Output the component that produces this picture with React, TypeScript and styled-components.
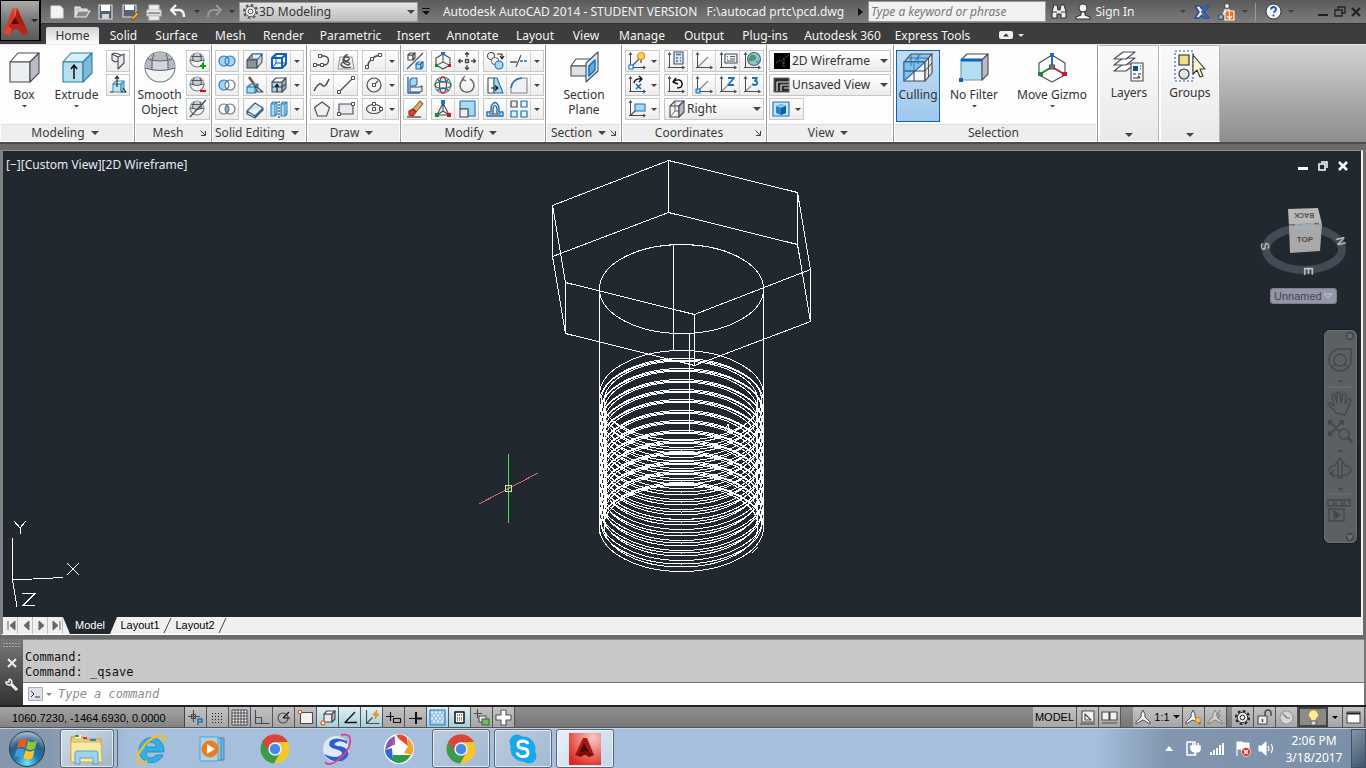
import React, { ReactNode } from "react";
import styled, { createGlobalStyle, css } from "styled-components";

const INK = "#474b53";
const BLUE = "#1d6fbf";
const SKY = "#a8d9ec";

const GlobalStyle = createGlobalStyle`
  * { box-sizing: border-box; }
  body { margin: 0; background: #6b6b6b; }
  button, input, select { font: inherit; color: inherit; margin: 0; padding: 0; border: 0; background: none; border-radius: 0; outline: 0; }
  svg { display: block; flex: none; }
  h1, h2, p { margin: 0; font: inherit; }
`;

const Page = styled.div`
  min-height: 100vh;
  display: flex;
  flex-direction: column;
  overflow: hidden;
  font: 12px/16px "Noto Sans", "Open Sans", sans-serif;
  color: #3a3a3a;
`;

/* ---------- header ---------- */
const Header = styled.header`
  display: grid;
  grid-template-columns: 41px 1fr;
  grid-template-rows: 24px 20px;
  background: #3d3d3d;
`;
const AppButton = styled.button`
  grid-row: 1 / 3;
  height: 41px;
  border: 1px solid #000;
  border-right-width: 2px;
  background: linear-gradient(#aaa, #777 50%, #5a5a5a);
  display: flex;
  align-items: center;
  padding-left: 2px;
`;
const TitleBar = styled.div`
  display: flex;
  align-items: center;
  padding: 0 2px 0 5px;
  background: linear-gradient(#5a5a5a, #7a7a7a 90%);
  border-bottom: 1px solid #303030;
  color: #f2f2f2;
`;
const BarButton = styled.button<{ $w: number }>`
  width: ${(p) => p.$w}px;
  height: 22px;
  flex: none;
  display: flex;
  align-items: center;
  justify-content: center;
`;
const Spacer = styled.div<{ $w?: number }>`
  ${(p) => (p.$w ? css`flex: 0 0 ${p.$w}px;` : css`flex: 1;`)}
`;
const Title = styled.h1`
  flex: 1;
  text-align: center;
  white-space: pre;
`;
const SelectWrap = styled.label<{ $w: number; $look?: "title" | "ribbon" }>`
  width: ${(p) => p.$w}px;
  height: ${(p) => (p.$look === "title" ? 20 : 22)}px;
  flex: none;
  display: flex;
  align-items: center;
  padding: 0 2px;
  color: #333;
  border: 1px solid ${(p) => (p.$look === "title" ? "#9a9a9a" : "#c6c6c6")};
  background: ${(p) => (p.$look === "title" ? "linear-gradient(#e4e4e4, #bdbdbd)" : "linear-gradient(#fff, #ebebeb)")};
  select {
    flex: 1;
    min-width: 0;
    appearance: none;
    height: 18px;
    line-height: 18px;
  }
`;
const SearchInput = styled.input`
  width: 178px;
  height: 21px;
  background: #f1f1f1;
  color: #333;
  font-style: italic;
  padding-left: 2px;
  border: 1px solid #999;
  &::placeholder { color: #777; opacity: 1; }
`;
const Divider = styled.span`
  width: 1px;
  height: 18px;
  background: #9a9a9a;
`;
const Tabs = styled.nav`
  display: flex;
  align-items: flex-end;
  padding-left: 2px;
`;
const Tab = styled.button<{ $w: number; $on?: boolean }>`
  width: ${(p) => p.$w - (p.$on ? 4 : 0)}px;
  margin: ${(p) => (p.$on ? "0 1px 0 3px" : "0")};
  height: 17px;
  flex: none;
  line-height: 16px;
  white-space: nowrap;
  color: #f4f4f4;
  ${(p) => p.$on && css`
    color: #333;
    background: linear-gradient(#d2d2d2, #fdfdfd);
    border-radius: 2px 2px 0 0;
  `}
`;
const RibbonToggle = styled.button`
  margin-left: 22px;
  height: 18px;
  display: flex;
  align-items: center;
  gap: 5px;
`;

/* ---------- ribbon ---------- */
const Ribbon = styled.section`
  display: flex;
  height: 100px;
  background: linear-gradient(#d2d2d2, #8c8c8c);
  border-top: 1px solid #e8e8e8;
  border-bottom: 2px solid #4c4c4c;
`;
const PanelBox = styled.section<{ $w: number }>`
  width: ${(p) => p.$w}px;
  flex: none;
  display: flex;
  flex-direction: column;
  background: #fdfdfd;
  border-right: 1px solid #9a9a9a;
  padding: 0 1px 1px 1px;
`;
const PanelBody = styled.div<{ $pad?: number }>`
  flex: 1;
  display: flex;
  align-items: flex-start;
  gap: 4px;
  padding: 5px 0 0 ${(p) => p.$pad ?? 1}px;
`;
const PanelTitle = styled.h2`
  height: 17px;
  display: flex;
  align-items: center;
  padding-right: 4px;
  background: #eee;
  border-top: 1px solid #ddd;
`;
const PanelName = styled.span`
  flex: 1;
  display: flex;
  align-items: center;
  justify-content: center;
  gap: 6px;
  white-space: nowrap;
`;
const Column = styled.div`
  display: flex;
  flex-direction: column;
  gap: 2px;
`;
const Row = styled.div`
  display: flex;
  gap: 4px;
`;
const Group = styled.div`
  display: flex;
  height: 22px;
  width: max-content;
  border: 1px solid #c8c8c8;
  background: linear-gradient(#fff, #ececec);
`;
const Tool = styled.button<{ $drop?: boolean; $plain?: boolean }>`
  width: ${(p) => (p.$plain ? 11 : p.$drop ? 13 : 24)}px;
  height: 20px;
  display: flex;
  align-items: center;
  justify-content: center;
  border-left: 1px solid ${(p) => (p.$plain ? "transparent" : "#d4d4d4")};
  &:first-child { border-left: 0; width: 22px; }
`;
const BigTool = styled.button<{ $w: number; $on?: boolean }>`
  width: ${(p) => p.$w}px;
  height: 72px;
  flex: none;
  display: flex;
  flex-direction: column;
  align-items: center;
  line-height: 15px;
  color: #333;
  border: 1px solid ${(p) => (p.$on ? "#0a63b0" : "transparent")};
  background: ${(p) => (p.$on ? "linear-gradient(#c3dcf3, #9fc9ee)" : "none")};
  span { margin: 4px 0 3px; white-space: pre-line; }
`;
const SlimPanel = styled.button<{ $w: number }>`
  width: ${(p) => p.$w}px;
  flex: none;
  display: flex;
  flex-direction: column;
  align-items: center;
  justify-content: space-between;
  color: #333;
  padding: 4px 0 4px;
  border: 1px solid #b5b5b5;
  border-left: 2px solid #fff;
  border-bottom-color: #fff;
  background: linear-gradient(#fafafa, #e9e9e9);
`;
const Stack = styled.span`
  display: flex;
  flex-direction: column;
  align-items: center;
  gap: 3px;
`;

/* ---------- drawing area ---------- */
const Frame = styled.main`
  flex: 1;
  display: flex;
  flex-direction: column;
  margin: 6px 3px 4px 0;
  border: 1px solid #8d8f8c;
  border-left: 3px solid #808080;
  border-right: 2px solid #f2f2f2;
  border-bottom: 1px solid #fff;
`;
const Canvas = styled.div`
  position: relative;
  flex: 1;
  min-height: 430px;
  background: #212830;
  overflow: hidden;
`;
const ViewLabel = styled.p`
  position: absolute;
  left: 3px;
  top: 6px;
  color: #e8eaec;
`;
const ModelDrawing = styled.svg`
  position: absolute;
  left: 0;
  top: 0;
`;
const UcsIcon = styled.svg`
  position: absolute;
  left: 0;
  bottom: 0;
`;
const WindowButtons = styled.div`
  position: absolute;
  right: 12px;
  top: 9px;
  display: flex;
  gap: 8px;
`;
const MiniButton = styled.button`
  width: 12px;
  height: 12px;
`;
const ViewCube = styled.svg`
  position: absolute;
  right: 11px;
  top: 50px;
`;
const UcsMenu = styled.button`
  position: absolute;
  right: 24px;
  top: 137px;
  width: 67px;
  height: 16px;
  display: flex;
  align-items: center;
  justify-content: space-between;
  padding: 0 3px;
  border-radius: 3px;
  border: 1px solid #7d8090;
  background: #9497a5;
  color: #45464f;
  font: 11px/14px "Liberation Sans", sans-serif;
`;
const NavBar = styled.div`
  position: absolute;
  right: 4px;
  top: 179px;
  width: 33px;
  height: 213px;
  border-radius: 5px;
  border: 1px solid #6b6f70;
  background: #5c6063;
  box-shadow: 0 0 2px #000;
`;
const LayoutBar = styled.div`
  height: 17px;
  display: flex;
  background: #f0f0f0;
  color: #000;
  font: 11px/17px "Liberation Sans", sans-serif;
`;
const LayoutNav = styled.button`
  width: 15px;
  height: 17px;
  display: flex;
  align-items: center;
  justify-content: center;
  border-right: 1px solid #c2c2c2;
`;
const LayoutTab = styled.button<{ $w: number; $on?: boolean }>`
  width: ${(p) => p.$w}px;
  height: 17px;
  white-space: nowrap;
  ${(p) => p.$on && css`
    color: #fff;
    background: #212830;
    clip-path: polygon(0 0, 100% 0, calc(100% - 7px) 100%, 7px 100%);
  `}
`;

/* ---------- command line ---------- */
const CommandPanel = styled.section`
  display: grid;
  grid-template-columns: 23px 1fr;
  height: 66px;
  border-right: 2px solid #777;
  font: 12px/15px "DejaVu Sans Mono", monospace;
  color: #111;
`;
const CommandGrip = styled.div`
  display: flex;
  flex-direction: column;
  align-items: center;
  gap: 10px;
  padding-top: 4px;
  background: linear-gradient(#777, #4d4d4d 60%, #333);
`;
const CommandBody = styled.div`
  display: flex;
  flex-direction: column;
  background: #c8c8c8;
  border-top: 1px solid #8a8a8a;
`;
const History = styled.div`
  flex: 1;
  padding: 10px 0 0 2px;
  white-space: pre;
`;
const Prompt = styled.label`
  height: 23px;
  display: flex;
  align-items: center;
  gap: 3px;
  padding-left: 5px;
  background: #fff;
  border-top: 1px solid #777;
  input { flex: 1; font-style: italic; padding-left: 3px; }
  input::placeholder { color: #8c8c8c; opacity: 1; }
`;

/* ---------- status bar ---------- */
const StatusBar = styled.section`
  height: 23px;
  display: flex;
  align-items: stretch;
  border-top: 2px solid #222;
  border-bottom: 1px solid #555;
  background: linear-gradient(#8e8e8e, #777);
  color: #000;
  font: 11px/20px "Liberation Sans", sans-serif;
`;
const Coordinates = styled.output`
  width: 185px;
  padding-left: 12px;
  line-height: 22px;
  border-right: 1px solid #444;
  background: linear-gradient(#a5a5a5, #838383);
`;
const StatusButton = styled.button<{ $w?: number; $on?: boolean; $pressed?: boolean }>`
  width: ${(p) => p.$w ?? 22}px;
  flex: none;
  display: flex;
  align-items: center;
  justify-content: center;
  gap: 3px;
  border-right: 1px solid #555;
  background: ${(p) => (p.$on ? "linear-gradient(#dff0f4, #a6cfdb)" : p.$pressed ? "#8a8a8a" : "linear-gradient(#c4c4c4, #a6a6a6)")};
  ${(p) => p.$pressed && css`border: 2px solid #444;`}
`;

/* ---------- taskbar ---------- */
const Taskbar = styled.footer`
  height: 40px;
  display: flex;
  align-items: center;
  gap: 4px;
  padding-left: 5px;
  background:
    linear-gradient(to right, #8497ab, #8699ae 50px, transparent 130px),
    linear-gradient(to left, #7b8fa8, #8296af 200px, transparent 270px),
    #a5bfdd;
  border-top: 1px solid #c2d0e0;
`;
const StartButton = styled.button`
  width: 51px;
  height: 39px;
  display: flex;
  justify-content: center;
  align-items: center;
  padding-right: 8px;
`;
const Task = styled.button<{ $open?: boolean; $on?: boolean; $stack?: boolean }>`
  width: 58px;
  height: 39px;
  flex: none;
  display: flex;
  align-items: center;
  justify-content: center;
  border: 1px solid transparent;
  ${(p) => (p.$open || p.$on) && css`
    border: 1px solid #55687f;
    border-radius: 3px;
    box-shadow: inset 0 0 0 1px rgba(255, 255, 255, 0.65);
    background: ${p.$on ? "linear-gradient(135deg, #e9f0f8, #c5d5e8)" : "linear-gradient(135deg, #bccbdc, #a3b9d3)"};
  `}
  ${(p) => p.$stack && css`
    width: 54px;
    margin-right: 4px;
    box-shadow: inset 0 0 0 1px rgba(255, 255, 255, 0.65), 3px 0 0 #a9bbd0, 4px 0 0 #55687f;
    background: linear-gradient(135deg, #d2dbe5, #a3b5c9);
  `}
`;
const Tray = styled.div`
  display: flex;
  align-items: center;
  height: 39px;
  color: #fff;
`;
const TrayButton = styled.button<{ $w: number }>`
  width: ${(p) => p.$w}px;
  height: 30px;
  display: flex;
  align-items: center;
  justify-content: center;
`;
const Clock = styled.time`
  width: 74px;
  text-align: center;
  line-height: 17px;
`;
const ShowDesktop = styled.button`
  width: 15px;
  height: 39px;
  border: 1px solid #3f5062;
  background: linear-gradient(135deg, #8395a8, #40566b);
`;

/* ---------- drawn parts ---------- */
const Caret = ({ s = 8, c = "#444" }: { s?: number; c?: string }) => (
  <svg width={s} height={s / 2} viewBox="0 0 8 4"><path d="M0 0h8L4 4z" fill={c} /></svg>
);
const Launcher = () => (
  <svg width="6" height="6" viewBox="0 0 6 6" stroke="#444" fill="none"><path d="M0.5 0.5L5 5M5.5 1v4.500H1" /></svg>
);
const Icon = ({ size = 20, children }: { size?: number; children: ReactNode }) => (
  <svg width={size} height={size} viewBox={`0 0 ${size} ${size}`} fill="none" stroke={INK} strokeWidth="1.100" strokeLinejoin="round">{children}</svg>
);

const cube = (x: number, y: number, w: number, d: number, front: string, top: string, side: string, line = INK) => (
  <g stroke={line}>
    <path d={`M${x} ${y}h${w}v${w}h${-w}z`} fill={front} />
    <path d={`M${x} ${y}l${d} ${-d}h${w}l${-d} ${d}z`} fill={top} />
    <path d={`M${x + w} ${y}l${d} ${-d}v${w}l${-d} ${d}z`} fill={side} />
  </g>
);
const globe = (
  <>
    <circle cx="9" cy="9" r="7" fill="#f4f5f7" stroke="#777b83" />
    <path d="M2 9a7 7 0 0 1 14 0q-7 3-14 0z" fill="#c5cad1" stroke="none" />
    <path d="M2 9q7 3 14 0M6 3q-2 4-1 7M12 3q2 4 1 7M3.500 5.500h11" strokeWidth="0.900" />
  </>
);
const axes = (
  <path d="M3.500 2v15M2 16.500h16M2 4l1.500-2.500L5 4M16 15l2.500 1.500L16 18" strokeWidth="1" />
);
const node = (x: number, y: number, c = INK, f = "#fff") => <rect x={x - 1.5} y={y - 1.5} width="3" height="3" fill={f} stroke={c} strokeWidth="1" />;
const venn = (l: string, r: string, m: string) => (
  <>
    <g stroke="none">
      <circle cx="7" cy="10" r="5" fill={l} /><circle cx="13" cy="10" r="5" fill={r} />
      <path d="M10 6a5 5 0 0 1 0 8a5 5 0 0 1 0-8z" fill={m} />
    </g>
    <circle cx="7" cy="10" r="5" stroke={l === "#fff" ? "#666b74" : "#2477bd"} />
    <circle cx="13" cy="10" r="5" stroke={r === "#fff" ? "#666b74" : "#2477bd"} />
  </>
);

const glyphs: Record<string, ReactNode> = {
  polysolid: <><path d="M4 3l6 3v4l-3 1-3-2zM10 6l6-3v9l-6 6z" fill="#e6e9ed" /><path d="M4 3l3-1 6 2" /></>,
  presspull: <>{cube(5, 9, 8, 3, "#bfe3f2", "#dff2f9", "#8cc7de", "#4c90b6")}<path d="M2 17h3M13 17h5l-3-4M9 12V2M7 4l2-3 2 3" stroke="#222" /></>,
  meshMore: <>{globe}<path d="M15 12v6M12 15h6" stroke="#12a012" strokeWidth="2.200" /></>,
  meshLess: <>{globe}<path d="M12 16h6" stroke="#c51414" strokeWidth="2.200" /></>,
  meshRefine: <>{globe}<path d="M2 18L18 1" strokeWidth="1.300" /></>,
  union: venn("#a8d4ee", "#a8d4ee", "#a8d4ee"),
  subtract: venn("#a8d4ee", "#fff", "#fff"),
  intersect: venn("#fff", "#fff", "#6fb4e2"),
  fillet: <><path d="M2 9h10v8H2zM2 9l5-6h10l-5 6" fill="#8d939b" /><path d="M12 9q1 0 1-3l4-3v8l-5 6z" fill="#cfd3d8" /><path d="M8 3h9l-4 5H8" fill="#e6ecf1" stroke={BLUE} /></>,
  slice: <><path d="M2 12h8v6H2zM2 12l4-3h7l-3 3M10 12l3-3v6l-3 3" fill="#a8d9ec" stroke="#2277aa" /><path d="M4 2l5 7" stroke="#8b4a3c" strokeWidth="2.500" /><path d="M9 10l9 7h-5z" fill="#e1e3e6" /></>,
  thicken: <path d="M2 12l8-8 8 5-8 8zM2 12v3l8 4 8-8V9M10 17v2" fill="#cfe9f4" stroke="#335d78" />,
  extractEdges: <g stroke="#0f62b4" strokeWidth="2"><path d="M3 7h10v10H3zM3 7l4-4h10v10l-4 4M13 7l4-4" /><path d="M7 3v9h10M7 12l-3 4" strokeWidth="1" /></g>,
  extrudeFaces: <>{cube(3, 7, 10, 4, SKY, "#fff", "#9db4c0")}<path d="M3 12h10l4-3" /><path d="M8 17v-7M6 12l2-3 2 3" stroke="#111" /></>,
  separate: <g stroke="#2d86c8"><path d="M2 5h4v12H2zM2 5l2-2h4l-2 2M8 3v12l-2 2" fill={SKY} /><path d="M12 5h4v12h-4zM12 5l2-2h4l-2 2M18 3v12l-2 2" fill={SKY} /><path d="M10 2v17" strokeDasharray="2 1" stroke="#333" /></g>,
  polyline: <><path d="M3 14h9a4.500 4.500 0 0 0 0-9H9" strokeWidth="1.400" />{node(3, 14)}{node(10, 14)}{node(8, 5)}</>,
  helix: <><path d="M2 18l2-12h12l2 12z" fill="#ededed" stroke="#999" /><path d="M15 16q-7 2-10-2 0-4 7-3 4 2 0 3-5-1-5-5 1-4 5-3 3 2-1 4-4 0-3-4 2-3 4-2" strokeWidth="1.300" /></>,
  arc: <><path d="M3 17Q5 6 16 4" strokeWidth="1.300" />{node(3, 16)}{node(8, 8)}{node(16, 4)}</>,
  spline: <path d="M2 16q5-10 8-6t7-6" strokeWidth="1.500" />,
  line: <><path d="M3 17L17 3" strokeWidth="1.300" />{node(3, 17)}{node(17, 3)}</>,
  circle: <><circle cx="10" cy="10" r="7" fill="#f4f4f4" strokeWidth="1.200" /><path d="M10 10l4-4" />{node(10, 10)}</>,
  polygon: <path d="M10 3l7.500 5.500-3 8.500h-9L2.500 8.500z" fill="#eef1f4" />,
  rectangle: <><path d="M3 5h14v10H3z" fill="#e8ebee" />{node(3, 15)}{node(17, 5)}</>,
  ellipse: <><ellipse cx="10" cy="10" rx="7.500" ry="4.500" fill="#f4f4f4" />{node(10, 10)}{node(17, 10)}{node(10, 5)}</>,
  mirror3d: <><path d="M2 18L18 2" />{cube(3, 4, 5, 2, "#fff", "#fff", "#ddd")}{cube(11, 13, 5, 2, SKY, "#fff", SKY, BLUE)}</>,
  align3d: <><path d="M3 2v16h12" stroke={BLUE} strokeWidth="1.400" /><path d="M5 5l2-2h5v6l-2 2H5z" fill={SKY} stroke={BLUE} /><path d="M5 12h10l2-1v5l-2 1H5z" fill="#ececec" /></>,
  erase: <><path d="M2 18h14" strokeWidth="1.300" /><path d="M8 10l7-8 3 3-7 8z" fill="#d9b06c" stroke="#8a6530" /><path d="M4 12l4-2 3 3-3 4-4-1z" fill="#d2492a" stroke="#8c2b17" /></>,
  move3d: <><path d="M10 3l7 4v7l-7 4-7-4V7z" /><path d="M10 4v7l6 3M10 11l-6 3" strokeWidth="1" /><rect x="8" y="1" width="4" height="3" fill={BLUE} stroke="none" /><rect x="2" y="13" width="3" height="3" fill="#1b8a2c" stroke="none" /><rect x="15" y="13" width="3" height="3" fill="#bd2027" stroke="none" /></>,
  move: <path d="M10 1v5M10 14v5M1 10h5M14 10h5M8 3.500l2-2 2 2M8 16.500l2 2 2-2M3.500 8l-2 2 2 2M16.500 8l2 2-2 2M8.500 8.500h3v3h-3z" strokeWidth="1.400" />,
  rotate3d: <g strokeWidth="1.300"><circle cx="10" cy="10" r="8" stroke="#888" /><ellipse cx="10" cy="10" rx="3.500" ry="8" stroke="#c02a2a" /><ellipse cx="10" cy="10" rx="8" ry="3.500" stroke="#198a2f" /><path d="M4 4q6 6 12 0M4 16q6-6 12 0" stroke={BLUE} /></g>,
  rotate: <><path d="M7 4a7 7 0 1 0 6 0" strokeWidth="1.500" stroke="#666" /><path d="M8 1l-3 3 4 2" stroke="#666" /></>,
  scale3d: <><path d="M10 4L4 16h12zM10 4v8l6 4M10 12l-6 4" /><rect x="8" y="1" width="4" height="4" fill={BLUE} stroke="none" /><rect x="2" y="14" width="4" height="4" fill="#1b8a2c" stroke="none" /><rect x="14" y="14" width="4" height="4" fill="#bd2027" stroke="none" /></>,
  scale: <><path d="M3 2h15v15h-7v-7H3z" fill={SKY} stroke={BLUE} /><path d="M3 10h8v8H3z" fill="#eceef0" /></>,
  copy: <><circle cx="6" cy="5" r="3.500" fill="#f4f4f4" /><circle cx="10" cy="10" r="3.500" fill="#f4f4f4" stroke="#777" /><circle cx="14" cy="14" r="4" fill={SKY} stroke={BLUE} /><path d="M12 3h5v4M15 5l2 3 2-3" stroke="#222" /></>,
  trim: <><path d="M1 11h7" strokeWidth="1.400" /><path d="M7 16l5-12" /><path d="M11 10h8" stroke={BLUE} strokeWidth="1.400" strokeDasharray="3 1" /></>,
  stretch: <><path d="M3 3h6v15H3z" fill="#fff" /><path d="M9 3h3l6 15H9z" fill={SKY} stroke={BLUE} /><path d="M6 13h7M10 10.500l3 2.500-3 2.500" stroke="#111" /></>,
  fillet2d: <><path d="M2 18V13Q3 4 12 3h6v15z" fill="#eef2f6" stroke="#888" /><path d="M2 13Q3 4 13 3" stroke={BLUE} strokeWidth="1.500" /></>,
  offset: <><path d="M2 17h16v-4h-4V8q-4-9-8 0v5H2z" fill="#d9edf8" stroke={BLUE} strokeWidth="1.400" /><path d="M4 15h12M8 15V9q2-5 4 0v6" strokeWidth="1.200" /></>,
  array: <g strokeWidth="1.200"><path d="M2 2h6v6H2z" fill="#eee" /><g stroke={BLUE} fill="#e2f1fa"><path d="M12 2h6v6h-6zM2 12h6v6H2zM12 12h6v6h-6z" /></g></g>,
  ucsNamed: <>{axes}<path d="M4 16L12 8" /><circle cx="14" cy="5" r="3.500" fill="#ffd257" stroke="#e08a14" /><path d="M13 9h2v3h-2z" fill="#888" stroke="none" /><rect x="2" y="14" width="4" height="4" fill="#fff" stroke={BLUE} /></>,
  ucsX: <>{axes}<path d="M7 8q1-5 7-4M12 1l3 3-3 3" stroke="#111" strokeWidth="1.400" /><path d="M9 9l5 5M14 9l-5 5" stroke={BLUE} strokeWidth="1.700" /></>,
  ucsView: <>{axes}<path d="M8 5h10v7H8z" fill={SKY} stroke={BLUE} /><path d="M4 16l4-4" /></>,
  ucsIconProps: <>{axes}<path d="M8 1h9v12H8z" fill="#dfe9f2" /><path d="M10 3.500h5M10 7h2M14 7h1M10 10h2M14 10h1" stroke={BLUE} strokeWidth="1.400" /></>,
  ucsPrev: <>{axes}<path d="M8 6q7-3 8 2t-5 5M10 3L7 7l5 2" stroke="#111" strokeWidth="1.500" /></>,
  ucs: <>{axes}<path d="M4 16L14 6" stroke="#888" /></>,
  ucsManager: <>{axes}<path d="M7 3h12v9H7z" fill="#f3f6f9" /><path d="M9 5.500h1M12 5.500h5M9 8h1M12 8h5M9 10h8" strokeWidth="0.900" /></>,
  ucsWorld: <>{axes}<circle cx="12" cy="8" r="6.500" fill="#8fc0dc" stroke="#41687e" /><path d="M9 4q4-1 5 2t-4 4-3-3zM14 10l3-1-2 4z" fill="#4f9a5a" stroke="none" /></>,
  ucsOrigin: <>{axes}<path d="M4 16L14 6" stroke="#888" /><rect x="2" y="14" width="4" height="4" fill="#9fd0f5" stroke={BLUE} /></>,
  ucsZ: <>{axes}<path d="M4 16l5-5" stroke="#888" /><path d="M10 3h6l-6 7h6" stroke={BLUE} strokeWidth="1.800" /></>,
  ucs3: <>{axes}<path d="M4 16l5-5" stroke="#888" /><path d="M10 3h5l-2 3q3 0 2 3-2 2-5 0" stroke={BLUE} strokeWidth="1.800" /></>,
  rightFace: <><path d="M3 7h9v11H3zM3 7l5-5h9l-5 5" fill="#f2f2f2" /><path d="M12 7l5-5v11l-5 5z" fill="#b4bac2" /><path d="M8 2v10h4M8 12l-5 6" strokeWidth="0.800" /></>,
  wireStyle: <><rect x="2" y="2" width="16" height="16" fill="#000" stroke="none" /><path d="M4 12l4-3 3 2v4M11 8l6-4M12 8v8" stroke="#777" strokeDasharray="2 1" strokeWidth="0.800" /></>,
  savedView: <><rect x="2" y="3" width="15" height="14" fill="#2b2b2b" stroke="#666" /><path d="M5 7h12M5 7v9M9 10h8M9 10v6M12 13h5" stroke="#ddd" strokeWidth="1.200" /></>,
  viewCubeTool: <><rect x="2" y="3" width="16" height="14" fill="#c7e4f7" stroke={BLUE} /><path d="M5 7l5-2 5 2v7l-5 2-5-2z" fill="#1f86cc" stroke="none" /><path d="M5 7l5 2 5-2-5-2z" fill="#7cc7f1" stroke="none" /><path d="M10 9v7l5-2V7z" fill="#12609c" stroke="none" /></>,
};

const bigGlyphs: Record<string, ReactNode> = {
  box: <><path d="M2 11l8-9h21l-9 9z" fill="#fff" /><path d="M2 11h20v20H2z" fill="#eceef2" /><path d="M22 11l9-9v20l-9 9z" fill="#b9bcc6" /></>,
  extrude: <><path d="M2 11l8-9h21l-9 9z" fill="#d8f0f8" stroke="#2d7ea6" /><path d="M2 11h20v20H2z" fill="#b4e0f0" stroke="#2d7ea6" /><path d="M22 11l9-9v20l-9 9z" fill="#7fb9d2" stroke="#2d7ea6" /><path d="M13 28V15M10 18l3-4 3 4" stroke="#111" strokeWidth="1.500" /></>,
  smooth: <><circle cx="16" cy="16" r="15" fill="#f2f3f5" stroke="#777b83" /><path d="M1 17a15 15 0 0 1 30 0q-15 5-30 0z" fill="#b4bac3" stroke="none" /><path d="M9 9q7 2 14 0l1 9q-8 2-16 0z" fill="#d3d7dc" stroke="none" /><path d="M1 17q15 5 30 0M4 8q12 4 24 0M10 2q-3 8-2 16M22 2q3 8 2 16" stroke="#5c616a" strokeWidth="1" /></>,
  section: <><path d="M3 15l5-7h17l-4 7z" fill="#fff" /><path d="M3 15h17v10H3z" fill="#dfe1e5" /><path d="M18 12L30 1v19L18 31z" fill="#d2e6f0" fillOpacity="0.900" /><path d="M21 15l6-6v10l-6 6z" fill="#5bb0df" stroke={BLUE} strokeWidth="1.500" /></>,
  culling: <><path d="M2 11l7-8h21l-7 8z" fill="#8ec5e8" /><path d="M2 11h21v19H2z" fill="#f5f7f9" /><path d="M2 11h21L2 30z" fill="#86c2e8" stroke="#1d6fbf" /><path d="M23 11l7-8v19l-7 8z" fill="#dfe3e8" /><path d="M12 20v10M23 20H12l-9 0M23 20l7-8" stroke="#444" strokeWidth="1" /><path d="M12 11v10M2 20h10M12 11l7-8M5 7h21M9 3v12M16 3v10" stroke="#2a6fb0" strokeWidth="0.900" /><path d="M26.500 7v19" strokeWidth="0.900" /></>,
  noFilter: <><path d="M3 9l6-6h21l-6 6z" fill="#fff" /><path d="M3 9h21v20H3z" fill="#b4dfef" stroke="#6a9cb4" /><path d="M24 9l6-6v20l-6 6z" fill="#b9bcc6" /><path d="M3 9h21" stroke="#0f62b4" strokeWidth="3" /><rect x="1" y="27" width="4" height="4" fill="#0f62b4" stroke="none" /></>,
  gizmo: <><path d="M16 4l13 8v12l-13 7-13-7V12z" fill="#fcfcfc" /><path d="M16 4v12" stroke={BLUE} strokeWidth="2" /><path d="M16 16L4 23" stroke="#1b8a2c" strokeWidth="2" /><path d="M16 16l12 7" stroke="#bd2027" strokeWidth="2" /><rect x="14" y="2" width="4" height="4" fill={BLUE} stroke="none" /><rect x="2" y="21" width="5" height="4" fill="#1b8a2c" stroke="none" /><rect x="26" y="21" width="5" height="4" fill="#bd2027" stroke="none" /><rect x="13.500" y="14" width="5" height="4" fill="#777" /></>,
  layers: <><g fill="#fff"><path d="M1 21l9-7h12l-9 7z" /><path d="M1 15l9-7h12l-9 7z" /><path d="M1 9l9-7h12l-9 7z" /></g><path d="M18 13h12v18H18z" fill="#f4f6f8" /><path d="M20 16h5v5h-5z" fill="#0f4f94" stroke="none" /><path d="M27 16h1M27 19h1M20 24h3M25 24h3M20 28h6M25 26l2 2" stroke="#333" /></>,
  groups: <><path d="M1 1h18v30H1z" stroke="#1f5fae" strokeDasharray="2 2" /><path d="M5 5h10v10H5z" fill="#efe18c" stroke="#222" /><circle cx="10" cy="24" r="5" fill="#dfeef3" stroke="#222" /><path d="M19 5v19l4-4 3 7 3-1-3-7h5z" fill="#fbf7cf" stroke="#333" /></>,
};

const G = ({ n }: { n: string }) => <Icon>{glyphs[n]}</Icon>;
const BigG = ({ n }: { n: string }) => <Icon size={32}>{bigGlyphs[n]}</Icon>;

const Tools = ({ names, drop, plain }: { names: string[]; drop?: boolean; plain?: boolean }) => (
  <Group>
    {names.map((n) => <Tool key={n} aria-label={n}><G n={n} /></Tool>)}
    {drop && <Tool $drop $plain={plain} aria-label="More"><Caret s={6} /></Tool>}
  </Group>
);
const Panel = ({ name, w, pad, drop, launch, children }: { name: string; w: number; pad?: number; drop?: boolean; launch?: boolean; children: ReactNode }) => (
  <PanelBox $w={w}>
    <PanelBody $pad={pad}>{children}</PanelBody>
    <PanelTitle><PanelName>{name}{drop && <Caret />}</PanelName>{launch && <Launcher />}</PanelTitle>
  </PanelBox>
);
const Pick = ({ label, w, look = "ribbon", icon, options }: { label: string; w: number; look?: "title" | "ribbon"; icon: ReactNode; options: string[] }) => (
  <SelectWrap $w={w} $look={look}>
    {icon}
    <select aria-label={label} defaultValue={options[0]}>{options.map((o) => <option key={o}>{o}</option>)}</select>
    <Caret />
  </SelectWrap>
);

const Gear = ({ size = 17, c = "#555" }: { size?: number; c?: string }) => (
  <svg width={size} height={size} viewBox="0 0 18 18" fill="none" stroke={c}>
    <circle cx="9" cy="9" r="7" strokeWidth="2" strokeDasharray="3 2.500" /><circle cx="9" cy="9" r="5.500" fill="#e8e8e8" /><circle cx="9" cy="9" r="2.500" />
  </svg>
);

const tabs: [string, number][] = [["Home", 57], ["Solid", 47], ["Surface", 59], ["Mesh", 49], ["Render", 57], ["Parametric", 77], ["Insert", 49], ["Annotate", 69], ["Layout", 56], ["View", 46], ["Manage", 66], ["Output", 58], ["Plug-ins", 64], ["Autodesk 360", 91], ["Express Tools", 89]];

const quick: [string, ReactNode][] = [
  ["New", <path d="M3 4h9l3 3v9H3z" fill="#f4f4f4" stroke="#ddd" />],
  ["Open", <><path d="M3 15V5h5l1 2h6v3" fill="#ccc" stroke="#eee" /><path d="M3 15l3-6h12l-4 6z" fill="#8a8a8a" stroke="#eee" /></>],
  ["Save", <><path d="M3 3h13v14H3z" fill="#56606e" stroke="#dfe3e8" /><path d="M5 3h9v6H5z" fill="#fff" stroke="none" /><path d="M6 12h7v5H6z" fill="#cfd5dc" stroke="none" /></>],
  ["Save As", <><path d="M3 3h13v12H3z" fill="#56606e" stroke="#dfe3e8" /><path d="M5 3h9v5H5z" fill="#fff" stroke="none" /><path d="M11 17l6-7 2 2-6 6z" fill="#f2c45a" stroke="#8b5a18" /></>],
  ["Print", <><path d="M5 3h10v5H5zM3 8h14v6H3zM5 13h10v5H5z" fill="#eee" stroke="#c4c4c4" /><path d="M4 11h12" stroke="#555" /></>],
  ["Undo", <path d="M4 8h8q4 1 4 7M8 3L3 8l5 5" stroke="#f4f4f4" strokeWidth="2.400" />],
];

const ThreadedBolt = () => {
  const rings = Array.from({ length: 13 }, (_, i) => 403 + Math.round(i * 10.3));
  return (
    <ModelDrawing width="900" height="600" viewBox="3 151 900 600" fill="none" stroke="#fff" shapeRendering="crispEdges" aria-label="Bolt wireframe">
      <path d="M668.500 160.500L797.500 192.500L810.500 269.500L694.500 314.500L565.500 282.500L552.500 205.500z" />
      <path d="M668.500 212.500L797.500 244.500L810.500 321.500L694.500 365.500L565.500 333.500L552.500 256.500z" />
      <path d="M668.500 160v52M797.500 192v52M810.500 269v52M694.500 314v51M565.500 282v51M552.500 205v51" />
      <ellipse cx="681.500" cy="289" rx="82" ry="44.500" />
      <path d="M599.500 289v245M763.500 289v237M673.500 244v106M689.500 333v99" />
      <path d="M599.500 395a82 44.500 0 0 1 164 0" />
      {rings.map((c) => (
        <g key={c}>
          <ellipse cx="681.500" cy={c} rx="82" ry="44.500" />
          <ellipse cx="681" cy={c - 1} rx="77" ry="41" />
          <ellipse cx="681.500" cy={c - 3} rx="80" ry="40" />
        </g>
      ))}
      <path d="M606.500 440v72M757.500 435v75M725 430l3-6v8M752 553l6-6" />
    </ModelDrawing>
  );
};

const Chrome = () => (
  <svg width="30" height="30" viewBox="0 0 30 30">
    <circle cx="15" cy="15" r="14.500" fill="#f4c72e" />
    <path d="M15 15L2.400 7.800A14.500 14.500 0 0 1 27.600 7.800L15 8.500z" fill="#d8463a" />
    <path d="M15 15L2.400 7.800A14.500 14.500 0 0 0 14 29.500L20.500 18z" fill="#3a9a4e" />
    <path d="M15 8h12.700A14.500 14.500 0 0 0 2.400 7.800L9 18z" fill="#d8463a" />
    <circle cx="15" cy="15" r="6.700" fill="#f3f3f3" /><circle cx="15" cy="15" r="5.200" fill="#4688e8" />
  </svg>
);

const drafting: [string, boolean, ReactNode][] = [
  ["Infer", false, <><path d="M6.500 1v12M1 7.500h12M4.500 5.500h4v4h-4z" /><path d="M11 16v-6h4v3h-3" stroke={BLUE} strokeWidth="1.500" /></>],
  ["Snap", false, <path d="M3 4.500h10M3 7.500h10M3 10.500h10M3 13.500h10" strokeDasharray="1 2" stroke="#222" />],
  ["Grid", false, <path d="M1 1h15v15H1zM4 1v15M7 1v15M10 1v15M13 1v15M1 4h15M1 7h15M1 10h15M1 13h15" fill="#f2f2f2" strokeWidth="1" />],
  ["Ortho", false, <path d="M2.500 1v13.500h14M2 8.500h6.500V14" />],
  ["Polar", false, <><circle cx="8" cy="9" r="5" /><path d="M8 9h7M8 9l6-6" stroke="#111" /></>],
  ["Object snap", false, <><path d="M3.500 3.500h12v11h-12z" fill="#f2f2f2" /><circle cx="3" cy="3" r="1.800" fill="#fff" stroke="#e0501a" /></>],
  ["3D object snap", true, <>{cube(5, 5, 8, 3, "#e8e8e8", "#fff", "#bbb")}<circle cx="4" cy="14" r="2" fill="#fff" stroke="#e0501a" /></>],
  ["Tracking", true, <path d="M14 3L4 13.500h12" stroke="#111" strokeWidth="1.300" />],
  ["Dynamic UCS", true, <><path d="M3.500 1v13.500h13M3.500 14.500l6-6" /><path d="M14 1l-4 5h3l-1 4 4-5h-3z" fill="#ff9a1f" stroke="#e07b10" strokeWidth="0.700" /></>],
  ["Dynamic input", false, <path d="M5.500 3v9M1 7.500h8M8.500 9.500h7v4h-7z" stroke="#111" />],
  ["Lineweight", false, <><path d="M2 9.500h7" stroke="#111" strokeWidth="1" /><path d="M9 3v12M9 9.500h6" stroke="#111" strokeWidth="2" /></>],
  ["Transparency", true, <><path d="M1 1h15v15H1z" fill="#9cc5ea" stroke="#2f77bd" /><path d="M2 3.500h13M4 6.500h11M2 9.500h13M4 12.500h11" stroke="#e7f2fb" strokeDasharray="2 2" strokeWidth="2" /></>],
  ["Quick properties", true, <><path d="M4 3h9v11H4z" fill="#fff" stroke="#111" strokeWidth="1.500" /><path d="M6 6h5M6 9h5M6 11h5" stroke="#111" strokeDasharray="1 1" /></>],
  ["Selection cycling", false, <><path d="M4.500 0v9M1 4.500h8" /><path d="M6 7h7v6H6z" fill="#eee" /><path d="M9 10h7v6H9z" fill="#7fb06a" stroke="#3b6b2b" /></>],
  ["Annotation monitor", false, <path d="M6 1h5v5h5v5h-5v5H6v-5H1V6h5z" fill="#fff" stroke="#555" />],
];

const Man = () => <path d="M8 1l2 4v3l5 5v2l-5-3-2-1-2 1-5 3v-2l5-5V5z" fill="#f0f0f0" stroke="#444" strokeWidth="0.900" />;

export default function App() {
  return (
    <Page>
      <GlobalStyle />
      <Header>
        <AppButton aria-label="Application menu">
          <svg width="28" height="30" viewBox="0 0 28 30">
            <path d="M10 2h4l4 6-5 6-5-4z" fill="#ee5a40" /><path d="M10 2L1 25l7-1 5-11z" fill="#d43a27" /><path d="M14 2l10 22-7 1-5-11z" fill="#a81f16" />
            <path d="M1 25q5-8 12-8t11 7l1 4-6 1q-2-6-6-6t-6 6l-6-1z" fill="#b82317" /><path d="M12 11l4 7H8z" fill="#5a0d08" /><path d="M1 25l4-5 4 3-2 6-6-1z" fill="#e0452f" />
          </svg>
          <Caret s={7} c="#222b38" />
        </AppButton>
        <TitleBar>
          {quick.map(([n, g]) => <BarButton key={n} $w={24} aria-label={n}><Icon>{g}</Icon></BarButton>)}
          <BarButton $w={13} aria-label="Undo list"><Caret s={6} c="#333" /></BarButton>
          <BarButton $w={22} aria-label="Redo"><Icon><path d="M16 8H8q-4 1-4 7M12 3l5 5-5 5" stroke="#999" strokeWidth="2" /></Icon></BarButton>
          <BarButton $w={14} aria-label="Redo list"><Caret s={6} c="#333" /></BarButton>
          <Pick label="Workspace" w={179} look="title" icon={<Gear />} options={["3D Modeling"]} />
          <BarButton $w={16} aria-label="Customize">
            <svg width="8" height="7" viewBox="0 0 8 7"><path d="M0 0h8v1H0zM0 3h8L4 7z" fill="#111" /></svg>
          </BarButton>
          <Title>{"Autodesk AutoCAD 2014 - STUDENT VERSION   F:\\autocad prtc\\pcd.dwg"}</Title>
          <BarButton $w={15} aria-label="Expand search"><svg width="5" height="8" viewBox="0 0 5 8"><path d="M0 0l5 4-5 4z" fill="#111" /></svg></BarButton>
          <SearchInput aria-label="Search" placeholder="Type a keyword or phrase" />
          <BarButton $w={26} aria-label="Find"><Icon><g fill="#eee" stroke="#333"><path d="M3 16V9l2-6h3l1 5h2l1-5h3l2 6v7h-5v-4H8v4z" /><path d="M3 10h5M12 10h5" /></g></Icon></BarButton>
          <BarButton $w={22} aria-label="Account"><Icon><circle cx="10" cy="6" r="4" fill="#f4f4f4" stroke="#333" /><path d="M8 10h4v3l5 2v2H3v-2l5-2z" fill="#f4f4f4" stroke="#333" /></Icon></BarButton>
          <BarButton $w={42}>Sign&nbsp;In</BarButton>
          <Spacer $w={40} />
          <BarButton $w={14} aria-label="Sign in list"><Caret s={6} c="#3c3c3c" /></BarButton>
          <BarButton $w={24} aria-label="Exchange"><Icon><path d="M3 4h5l2 3 3-3h4l-5 6 5 6h-5l-2-3-3 3H3l4-6z" fill="#e8eef8" stroke="#2b4c8c" strokeWidth="1.500" /><path d="M12 4h5l-5 6 5 6h-4l-4-6z" fill="#3563ad" stroke="none" /></Icon></BarButton>
          <BarButton $w={26} aria-label="Autodesk 360"><Icon><path d="M5 15l5-10 3 5" stroke="#ddd" strokeWidth="2" /><circle cx="10" cy="4" r="2.500" fill="#eee" /><circle cx="4" cy="15" r="2.500" fill="#7fb3e6" /><rect x="8" y="9" width="9" height="9" fill="#e8730f" stroke="#fff" /><path d="M12.500 10v6M10 14l2.500 2.500L15 14" stroke="#fff" /></Icon></BarButton>
          <BarButton $w={10} aria-label="Share list"><Caret s={6} c="#3c3c3c" /></BarButton>
          <Spacer $w={5} />
          <Divider />
          <Spacer $w={5} />
          <BarButton $w={24} aria-label="Help">
            <svg width="17" height="17" viewBox="0 0 17 17"><circle cx="8.500" cy="8.500" r="7.500" fill="#f2f6fc" stroke="#333" /><path d="M6 6.500q0-2.500 2.500-2.500T11 6.500q0 1.500-2.500 3M8.500 11.500v2" stroke="#2a5db0" strokeWidth="2" fill="none" /></svg>
          </BarButton>
          <BarButton $w={12} aria-label="Help list"><Caret s={6} c="#3c3c3c" /></BarButton>
          <Spacer $w={18} />
          <BarButton $w={16} aria-label="Minimize"><svg width="12" height="12" viewBox="0 0 12 12"><path d="M1 8h10v2H1z" fill="#222" /></svg></BarButton>
          <BarButton $w={17} aria-label="Restore"><svg width="12" height="12" viewBox="0 0 12 12" fill="none" stroke="#222" strokeWidth="1.300"><path d="M1 4h7v6H1zM4 4V1h7v6H8" /></svg></BarButton>
          <BarButton $w={16} aria-label="Close"><svg width="12" height="12" viewBox="0 0 12 12" stroke="#222" strokeWidth="2.200"><path d="M2 2l8 8M10 2l-8 8" /></svg></BarButton>
        </TitleBar>
        <Tabs>
          {tabs.map(([n, w], i) => <Tab key={n} $w={w} $on={i === 0}>{n}</Tab>)}
          <RibbonToggle aria-label="Minimize ribbon">
            <svg width="14" height="8" viewBox="0 0 14 8"><rect width="14" height="8" rx="2" fill="#eee" /><path d="M4 5.500h6L7 2.500z" fill="#333" /></svg>
            <Caret s={6} c="#ddd" />
          </RibbonToggle>
        </Tabs>
      </Header>

      <Ribbon>
        <Panel name="Modeling" w={135} pad={0} drop>
          <BigTool $w={46}><BigG n="box" /><span>Box</span><Caret s={5} /></BigTool>
          <BigTool $w={51}><BigG n="extrude" /><span>Extrude</span><Caret s={5} /></BigTool>
          <Column><Tools names={["polysolid"]} /><Tools names={["presspull"]} /></Column>
        </Panel>
        <Panel name="Mesh" w={77} pad={1} launch>
          <BigTool $w={45}><BigG n="smooth" /><span>{"Smooth\nObject"}</span></BigTool>
          <Column><Tools names={["meshMore"]} /><Tools names={["meshLess"]} /><Tools names={["meshRefine"]} /></Column>
        </Panel>
        <Panel name="Solid Editing" w={95} pad={2} drop>
          <Column><Tools names={["union"]} /><Tools names={["subtract"]} /><Tools names={["intersect"]} /></Column>
          <Column><Tools names={["fillet", "extractEdges"]} drop /><Tools names={["slice", "extrudeFaces"]} drop /><Tools names={["thicken", "separate"]} drop /></Column>
        </Panel>
        <Panel name="Draw" w={94} pad={2} drop>
          <Column><Tools names={["polyline", "helix"]} /><Tools names={["spline", "line"]} /><Tools names={["polygon", "rectangle"]} /></Column>
          <Column><Tools names={["arc"]} drop /><Tools names={["circle"]} drop /><Tools names={["ellipse"]} drop /></Column>
        </Panel>
        <Panel name="Modify" w={145} drop>
          <Column><Tools names={["mirror3d"]} /><Tools names={["align3d"]} /><Tools names={["erase"]} /></Column>
          <Column><Tools names={["move3d", "move"]} /><Tools names={["rotate3d", "rotate"]} /><Tools names={["scale3d", "scale"]} /></Column>
          <Column><Tools names={["copy", "trim"]} drop /><Tools names={["stretch", "fillet2d"]} drop /><Tools names={["offset", "array"]} drop /></Column>
        </Panel>
        <Panel name="Section" w={76} pad={12} drop launch>
          <BigTool $w={50}><BigG n="section" /><span>{"Section\nPlane"}</span></BigTool>
        </Panel>
        <Panel name="Coordinates" w={145} pad={2} launch>
          <Column><Tools names={["ucsNamed"]} drop plain /><Tools names={["ucsX"]} drop plain /><Tools names={["ucsView"]} drop plain /></Column>
          <Column>
            <Row><Tools names={["ucsIconProps"]} /><Tools names={["ucs", "ucsManager", "ucsWorld"]} /></Row>
            <Row><Tools names={["ucsPrev"]} /><Tools names={["ucsOrigin", "ucsZ", "ucs3"]} /></Row>
            <Pick label="UCS" w={100} icon={<G n="rightFace" />} options={["Right"]} />
          </Column>
        </Panel>
        <Panel name="View" w={127} drop>
          <Column>
            <Pick label="Visual style" w={122} icon={<G n="wireStyle" />} options={["2D Wireframe"]} />
            <Pick label="Saved view" w={122} icon={<G n="savedView" />} options={["Unsaved View"]} />
            <Tools names={["viewCubeTool"]} drop plain />
          </Column>
        </Panel>
        <Panel name="Selection" w={204}>
          <BigTool $w={44} $on><BigG n="culling" /><span>Culling</span></BigTool>
          <BigTool $w={60}><BigG n="noFilter" /><span>No Filter</span><Caret s={5} /></BigTool>
          <BigTool $w={88}><BigG n="gizmo" /><span>Move Gizmo</span><Caret s={5} /></BigTool>
        </Panel>
        <SlimPanel $w={61}><Stack><BigG n="layers" />Layers</Stack><Caret /></SlimPanel>
        <SlimPanel $w={61}><Stack><BigG n="groups" />Groups</Stack><Caret /></SlimPanel>
      </Ribbon>

      <Frame>
        <Canvas>
          <ThreadedBolt />
          <ModelDrawing width="560" height="420" viewBox="3 151 560 420" fill="none" shapeRendering="crispEdges" aria-label="Crosshair">
            <path d="M479 504L538 473" stroke="#d96a6a" />
            <path d="M508.500 454v69" stroke="#3ee63e" />
            <path d="M505.500 485.500h6v6h-6z" stroke="#c8f0b8" />
          </ModelDrawing>
          <ViewLabel>[−][Custom View][2D Wireframe]</ViewLabel>
          <WindowButtons>
            <MiniButton aria-label="Minimize view"><svg width="12" height="12" viewBox="0 0 12 12"><path d="M1 7h10v3H1z" fill="#fff" /></svg></MiniButton>
            <MiniButton aria-label="Restore view"><svg width="12" height="12" viewBox="0 0 12 12" fill="none" stroke="#fff" strokeWidth="1.500"><path d="M2 4h6v6H2zM4 2h6v6" /></svg></MiniButton>
            <MiniButton aria-label="Close view"><svg width="12" height="12" viewBox="0 0 12 12" stroke="#fff" strokeWidth="2.500"><path d="M2 2l8 8M10 2l-8 8" /></svg></MiniButton>
          </WindowButtons>
          <ViewCube width="92" height="80" viewBox="1258 201 92 80" fontFamily="Liberation Sans, sans-serif" fontWeight="700" textAnchor="middle">
            <ellipse cx="1304" cy="249" rx="38" ry="21" fill="none" stroke="#434b54" strokeWidth="8" />
            <path d="M1288 209l30-1 4 16-33 2z" fill="#b9b9b9" /><path d="M1289 226l33-2-2 27-30 2z" fill="#a9a9a9" />
            <path d="M1289 225l33-2" stroke="#555" strokeDasharray="6 2" />
            <rect x="1295" y="223" width="20" height="7" fill="#a4b0ba" opacity="0.700" />
            <text x="1305" y="242" fontSize="8" fill="#4a4a4e">TOP</text>
            <text x="1304" y="-213" fontSize="7" fill="#555" transform="rotate(180 1304 0)">BACK</text>
            <text transform="translate(1261 247) rotate(80)" fontSize="12" fill="#b5b5b5">S</text>
            <text transform="translate(1345 240) rotate(-105) scale(1 1)" fontSize="12" fill="#b5b5b5" dy="0">N</text>
            <text transform="translate(1304 271) rotate(90)" fontSize="13" fill="#c4c4c4">E</text>
          </ViewCube>
          <UcsMenu>Unnamed<svg width="10" height="6" viewBox="0 0 10 6" fill="none" stroke="#c4c6d0"><path d="M1 1h8L5 5z" /></svg></UcsMenu>
          <NavBar>
            <svg width="31" height="211" viewBox="1325 331 31 211" fill="none" stroke="#42474e" strokeWidth="1.300">
              <circle cx="1350" cy="336" r="3.500" fill="#4a4e52" /><path d="M1348 334l4 4M1352 334l-4 4" stroke="#777" />
              <path d="M1329 360a11 11 0 0 1 11-11h11v11a11 11 0 0 1-22 0z" /><circle cx="1340" cy="360" r="6" /><path d="M1332 367l4-3M1348 367l-4-3" />
              <path d="M1338 380h5l-2.500 3z" fill="#42474e" stroke="none" /><path d="M1327 387h26" stroke="#6a6e71" />
              <path d="M1336 413l-8-9q1-2 4 0l2 2-2-11q2-2 3 0l2 8v-10q2-2 3 0l1 10 2-9q2-1 3 1l-1 9 3-5q2-1 3 1l-4 10-2 5z" />
              <path d="M1329 421l14 14M1343 421l-14 14M1329 425v-4h4M1339 421h4v4M1329 431v4h4" strokeWidth="1.700" /><circle cx="1344" cy="434" r="5" fill="#5c6063" /><path d="M1348 438l4 4" strokeWidth="3" />
              <path d="M1338 450h5l-2.500 3z" fill="#42474e" stroke="none" />
              <path d="M1338 478v-15h-2l4-5 4 5h-2v15z" /><path d="M1336 465q-8 2-7 6 3 5 12 5 9-1 10-5t-7-6M1334 470l-4 4 5 3" />
              <path d="M1338 488h5l-2.500 3z" fill="#42474e" stroke="none" /><path d="M1327 494h26" stroke="#6a6e71" />
              <path d="M1328 500h6v6h-6zM1336 500h6v6h-6zM1344 500h6v6h-6zM1329 509h15v12h-15z" /><path d="M1334 511l6 4-6 4z" fill="#42474e" />
              <circle cx="1350" cy="537" r="3.500" fill="#4a4e52" /><path d="M1348 536h4l-2 3z" stroke="#777" />
            </svg>
          </NavBar>
          <UcsIcon width="90" height="107" viewBox="3 510 90 107" fill="none" stroke="#fff" shapeRendering="crispEdges" aria-label="UCS icon">
            <path d="M12.500 538v42L63 577.500M12.500 580L17 607M14 521l6 7 6-7M20.500 528v6M67 563l12 12M79 563l-12 12M22 593.500h13l-12 12h12" />
          </UcsIcon>
        </Canvas>
        <LayoutBar>
          {["M5 3v9M12 3v9L7 7.500z", "M11 3v9L6 7.500z", "M6 3v9l5-4.500z", "M12 3v9M5 3v9l5-4.500z"].map((d) => (
            <LayoutNav key={d} aria-label="Scroll layouts"><svg width="15" height="15" viewBox="0 0 15 15" fill="#666" stroke="#666"><path d={d} /></svg></LayoutNav>
          ))}
          <LayoutTab $w={54} $on>Model</LayoutTab>
          <LayoutTab $w={46}>Layout1</LayoutTab>
          <svg width="9" height="17" viewBox="0 0 9 17" stroke="#444"><path d="M1 16L8 1" /></svg>
          <LayoutTab $w={46}>Layout2</LayoutTab>
          <svg width="9" height="17" viewBox="0 0 9 17" stroke="#444"><path d="M1 16L8 1" /></svg>
        </LayoutBar>
      </Frame>

      <CommandPanel>
        <CommandGrip>
          <svg width="18" height="5" viewBox="0 0 18 5" stroke="#aaa" strokeDasharray="2 1"><path d="M0 0.500h18M0 3.500h18" /></svg>
          <svg width="10" height="10" viewBox="0 0 10 10" stroke="#eee" strokeWidth="2"><path d="M1 1l8 8M9 1L1 9" /></svg>
          <svg width="14" height="14" viewBox="0 0 14 14" fill="none" stroke="#eee"><path d="M6 6l6 6" strokeWidth="3" /><path d="M4 1v3H1q0 3 4 3 2-1 2-3-1-3-3-3" strokeWidth="1.500" /></svg>
        </CommandGrip>
        <CommandBody>
          <History>{"Command:\nCommand: _qsave"}</History>
          <Prompt>
            <svg width="15" height="14" viewBox="0 0 15 14" fill="#dde2ea" stroke="#aab"><path d="M.5.500h14v13H.5z" /><path d="M3 4l3 3-3 3M7 10h5" fill="none" stroke="#333" /></svg>
            <Caret s={6} c="#888" />
            <input aria-label="Command line" placeholder="Type a command" />
          </Prompt>
        </CommandBody>
      </CommandPanel>

      <StatusBar>
        <Coordinates>1060.7230, -1464.6930, 0.0000</Coordinates>
        {drafting.map(([n, on, g]) => <StatusButton key={n} $on={on} aria-label={n}><Icon size={17}>{g}</Icon></StatusButton>)}
        <Spacer />
        <StatusButton $w={44}>MODEL</StatusButton>
        <StatusButton aria-label="Quick view layouts"><Icon size={17}><path d="M3 2h12v11H3zM1 15h15" fill="#f2f2f2" /><path d="M6 5v6h6z" /></Icon></StatusButton>
        <StatusButton aria-label="Quick view drawings"><Icon size={17}><path d="M1 3h7v8H1zM9 3h7v8H9zM1 14h15" fill="#f2f2f2" /></Icon></StatusButton>
        <Spacer $w={12} />
        <StatusButton $w={50}><Icon size={16}><Man /></Icon>1:1<Caret s={7} c="#111" /></StatusButton>
        <StatusButton aria-label="Annotation visibility"><Icon size={17}><Man /><circle cx="13" cy="11" r="2.500" fill="#ffc44d" stroke="#e08a14" /></Icon></StatusButton>
        <StatusButton aria-label="Auto scale"><Icon size={17}><g opacity="0.500"><Man /><path d="M13 1l-3 5h3l-2 4" /></g></Icon></StatusButton>
        <Spacer $w={5} />
        <StatusButton aria-label="Workspace"><Gear c="#222" /></StatusButton>
        <StatusButton aria-label="Lock"><Icon size={17}><path d="M2 7h9v8H2z" fill="#eee" /><path d="M9 7V4q0-3 3-3t3 3v3M6.500 10v3" strokeWidth="1.500" /></Icon></StatusButton>
        <StatusButton aria-label="Hardware acceleration"><Icon size={17}><circle cx="8.500" cy="8.500" r="6.500" fill="#d6d6d6" stroke="#999" /><path d="M5 5l4 4h3" stroke="#777" /></Icon></StatusButton>
        <StatusButton $w={30} $pressed aria-label="Isolate objects"><Icon size={17}><path d="M6 12q0-2-2-4a5 5 0 1 1 9 0q-2 2-2 4z" fill="#ffe9a3" stroke="#a88b3a" /><path d="M6 12h5v4H6z" fill="#ddd" stroke="#666" /></Icon></StatusButton>
        <StatusButton $w={15} aria-label="Status menu"><Caret s={6} c="#000" /></StatusButton>
        <StatusButton aria-label="Clean screen"><Icon size={17}><path d="M2 3h13v11H2z" fill="#fff" /><path d="M2 4.500h13" stroke="#222" strokeWidth="2" /></Icon></StatusButton>
        <Spacer $w={1} />
      </StatusBar>

      <Taskbar>
        <StartButton aria-label="Start">
          <svg width="38" height="38" viewBox="0 0 38 38">
            <defs><radialGradient id="orb" cx="50%" cy="90%" r="85%"><stop offset="0" stopColor="#6fe6f8" /><stop offset="0.400" stopColor="#1f78a8" /><stop offset="0.700" stopColor="#2a5d86" /><stop offset="1" stopColor="#9db8cc" /></radialGradient></defs>
            <circle cx="19" cy="19" r="17.500" fill="url(#orb)" stroke="#203b55" />
            <path d="M11 10q5-3 8 0l-2 8q-4-2-8 0z" fill="#ea5a24" /><path d="M20 10.500q4 3 9 0l-2 8q-5 3-9 0z" fill="#8bc53c" />
            <path d="M8.500 19.500q4-2 8 0l-2 8q-4-2-8 0z" fill="#3f9be0" /><path d="M17.500 20q4 3 9 0l-2 8q-5 3-9 0z" fill="#fbc52d" />
          </svg>
        </StartButton>
        <Task $open $stack aria-label="Explorer">
          <svg width="34" height="32" viewBox="0 0 34 32">
            <path d="M1 4h12l1 2h17v23H1z" fill="#e9cf78" stroke="#b69b45" /><path d="M5 2h6v3H5z" fill="#fff" /><path d="M5 2h4v2H5z" fill="#2a9a36" /><path d="M13 4h4v2h-4z" fill="#cc3a2c" /><path d="M20 6h6v2h-6z" fill="#2c82c9" />
            <path d="M1 9h30l1 20H1z" fill="#fae9a3" stroke="#d0b562" /><path d="M5 20q0-2 3-2h17q3 0 3 2v11h-5v-6H10v6H5z" fill="#9fd3ec" stroke="#5a9fc4" />
          </svg>
        </Task>
        <Task aria-label="Internet Explorer">
          <svg width="32" height="32" viewBox="0 0 32 32" fill="none">
            <path d="M29 17a12.500 12.500 0 1 0-1 5h-7q-2 3-5 3-5 0-5-6h18zM11 14q1-5 5-5t6 5z" fill="#2fb1e8" stroke="#1784bd" strokeWidth="0.800" fillRule="evenodd" />
            <path d="M4 30Q-1 26 8 14T27 3q4 1 2 7M4 30q3 1 8-2" stroke="#f2bd2c" strokeWidth="2.300" />
          </svg>
        </Task>
        <Task aria-label="Media Player">
          <svg width="28" height="26" viewBox="0 0 28 26"><path d="M8 2h17v22H8z" fill="#6fb4dc" stroke="#4889b4" /><path d="M5 2h17v22H5z" fill="#8cc8e6" stroke="#4889b4" /><path d="M1 1h18v24H1z" fill="#a5d6ee" stroke="#5e9fc4" /><circle cx="11" cy="13" r="8.500" fill="#f07a1c" /><path d="M8 8l8 5-8 5z" fill="#fff" /></svg>
        </Task>
        <Task aria-label="Chrome"><Chrome /></Task>
        <Task aria-label="Browser">
          <svg width="32" height="32" viewBox="0 0 32 32" fill="none"><circle cx="15" cy="16" r="13" fill="#dfe8f6" /><path d="M26 8Q14 3 9 8q-3 6 5 8t7 5q-5 6-18 0 6 9 18 7 8-4 6-10-3-5-11-5-5-2 0-4 5-2 10 2z" fill="#2a5fd0" /><path d="M20 2q11-2 9 8T17 27 4 29" stroke="#e2408c" strokeWidth="1.800" /></svg>
        </Task>
        <Task aria-label="Picasa">
          <svg width="32" height="32" viewBox="0 0 32 32"><circle cx="16" cy="16" r="15" fill="#fff" /><path d="M12 3Q3 6 2 17l8-5z" fill="#8a55b5" /><path d="M12 3v9l-2 0zM13 2q7-2 11 3l1 8-9-7z" fill="#e5483a" /><path d="M25 5q8 8 4 17l-8-2 4-7z" fill="#f2a62a" /><path d="M10 22h18q-5 8-12 8-5 0-7-3z" fill="#2f9a45" /><path d="M2 17l7-2 1 13q-8-4-8-11z" fill="#2c6bd3" /></svg>
        </Task>
        <Task $open aria-label="Chrome window"><Chrome /></Task>
        <Task $open aria-label="Skype">
          <svg width="30" height="30" viewBox="0 0 30 30"><circle cx="15" cy="15" r="12.500" fill="#16a9ea" /><circle cx="9" cy="8" r="7.500" fill="#16a9ea" /><circle cx="21" cy="22" r="7.500" fill="#16a9ea" /><path d="M20 10q-1-3-5-3-5 0-5 3.500t5 4 5 4q0 4-5 4t-6-4" fill="none" stroke="#fff" strokeWidth="3" /></svg>
        </Task>
        <Task $on aria-label="AutoCAD">
          <svg width="32" height="32" viewBox="0 0 32 32"><defs><radialGradient id="cad" cx="75%" cy="15%" r="95%"><stop offset="0" stopColor="#f6c9c4" /><stop offset="1" stopColor="#dd2a22" /></radialGradient></defs><rect width="32" height="32" fill="url(#cad)" /><path d="M14 5h4l7 17-5 2-4-6-4 6-6-2z" fill="#a81812" /><path d="M15 10l5 9h-9z" fill="#3c0705" /><path d="M7 22q9-8 18 0l-5 2q-4-4-8 0z" fill="#7c100b" /></svg>
        </Task>
        <Spacer />
        <Tray>
          <TrayButton $w={24} aria-label="Hidden icons"><svg width="8" height="5" viewBox="0 0 8 5"><path d="M0 5h8L4 0z" fill="#fff" /></svg></TrayButton>
          <TrayButton $w={24} aria-label="Power"><Icon size={17}><path d="M2 2h8v13H2z" stroke="#fff" strokeWidth="1.500" /><path d="M6 6h9v3q0 3-4 3T6 9zM8 3v3M13 3v3M10.500 12v4" fill="#fff" stroke="#fff" strokeWidth="1.500" /></Icon></TrayButton>
          <TrayButton $w={26} aria-label="Network"><svg width="16" height="14" viewBox="0 0 16 14" fill="#fff"><path d="M0 10h2v3H0zM3 8h2v5H3zM6 6h2v7H6zM9 3h2v10H9zM12 1h2v12h-2z" /></svg></TrayButton>
          <TrayButton $w={24} aria-label="Action center"><Icon size={17}><path d="M2 2v14M2 2h5l1 1h6v7H7L6 9H2z" fill="#fff" stroke="#fff" /><circle cx="11" cy="12" r="4.500" fill="#d92d20" stroke="#fff" strokeWidth="0.700" /><path d="M9 10l4 4M13 10l-4 4" stroke="#fff" strokeWidth="1.500" /></Icon></TrayButton>
          <TrayButton $w={22} aria-label="Volume"><Icon size={17}><path d="M1 6h3l4-4v13l-4-4H1z" fill="#fff" stroke="#fff" /><path d="M10 6q2 3 0 5M13 4q3 4 0 9" stroke="#fff" /></Icon></TrayButton>
          <Clock>2:06 PM<br />3/18/2017</Clock>
          <ShowDesktop aria-label="Show desktop" />
        </Tray>
      </Taskbar>
    </Page>
  );
}
